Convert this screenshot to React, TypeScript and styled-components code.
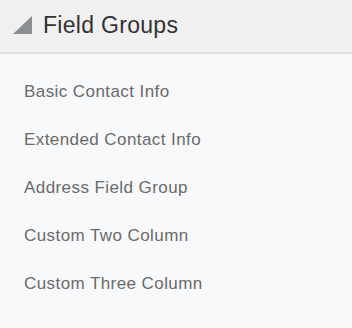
import React from "react";
import styled, { createGlobalStyle } from "styled-components";

const Global = createGlobalStyle`
  html, body { margin: 0; padding: 0; background: #f8f9fb; }
  body { font-family: "Liberation Sans", Arial, sans-serif; }
`;

const Panel = styled.section`
  width: 352px;
  height: 328px;
  background: #f8f9fb;
  display: flex;
  flex-direction: column;
`;

const Header = styled.header`
  height: 54px;
  box-sizing: border-box;
  background: #f0f0f0;
  border-bottom: 2px solid #dde0e4;
  display: flex;
  align-items: center;
  padding: 0 0 2px 13px;
  gap: 11px;
  flex: none;
`;

const Title = styled.h2`
  margin: 0;
  font-size: 23px;
  font-weight: 400;
  letter-spacing: 0.3px;
  color: #333333;
  line-height: 26px;
`;

const List = styled.ul`
  list-style: none;
  margin: 0;
  padding: 14px 0 0 24px;
`;

const Item = styled.li`
  font-size: 17px;
  letter-spacing: 0.42px;
  line-height: 48px;
  color: #6a6a6a;
`;

const Caret = () => (
  <svg width="19" height="18" viewBox="0 0 19 18" style={{ display: "block", marginTop: -1 }}>
    <polygon points="19,0 19,18 0,18" fill="#8b8e92" />
  </svg>
);

const items = [
  "Basic Contact Info",
  "Extended Contact Info",
  "Address Field Group",
  "Custom Two Column",
  "Custom Three Column",
];

export default function App() {
  return (
    <>
      <Global />
      <Panel>
        <Header>
          <Caret />
          <Title>Field Groups</Title>
        </Header>
        <List>
          {items.map((t) => (
            <Item key={t}>{t}</Item>
          ))}
        </List>
      </Panel>
    </>
  );
}
